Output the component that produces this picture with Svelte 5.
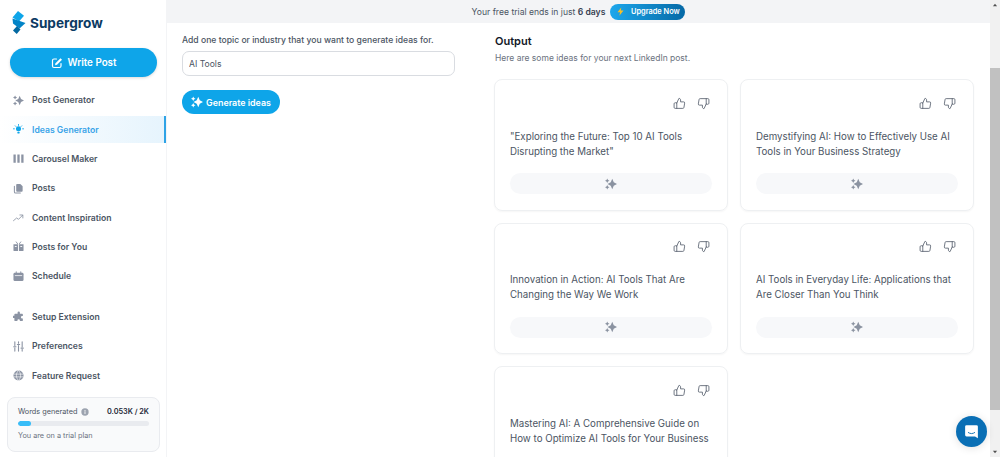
<script>
  const cards = [
    '"Exploring the Future: Top 10 AI Tools Disrupting the Market"',
    'Demystifying AI: How to Effectively Use AI Tools in Your Business Strategy',
    'Innovation in Action: AI Tools That Are Changing the Way We Work',
    'AI Tools in Everyday Life: Applications that Are Closer Than You Think',
    'Mastering AI: A Comprehensive Guide on How to Optimize AI Tools for Your Business'
  ];
  const spark = "M14.500 1.500l3 7 6.500 3.500-6.500 3.500-3 7-3-7L5 12l6.500-3.500zM4.500 1l1.500 2.800L9 5.500 6 7.200 4.500 10 3 7.200 0 5.500l3-1.700zM4.500 14l1.500 2.800 3 1.700-3 1.700L4.500 23 3 20.200 0 18.500l3-1.700z";
  const group1 = [
    { label: 'Post Generator', icon: 'spark' },
    { label: 'Ideas Generator', icon: 'bulb', active: true },
    { label: 'Carousel Maker', icon: 'bars' },
    { label: 'Posts', icon: 'docs' },
    { label: 'Content Inspiration', icon: 'trend' },
    { label: 'Posts for You', icon: 'gift' },
    { label: 'Schedule', icon: 'cal' }
  ];
  const group2 = [
    { label: 'Setup Extension', icon: 'puzzle' },
    { label: 'Preferences', icon: 'sliders' },
    { label: 'Feature Request', icon: 'globe' }
  ];
</script>

{#snippet navIcon(name)}
  <svg class="nav-icon" viewBox="0 0 24 24">
    {#if name === 'spark'}
      <path d={spark} fill="currentColor" />
    {:else if name === 'bulb'}
      <circle cx="12" cy="10.500" r="5.500" fill="currentColor" />
      <rect x="9.500" y="17" width="5" height="3.500" rx="1" fill="currentColor" />
      <path d="M12 1v2M3 10.500H1M23 10.500h-2M5 4l1.400 1.400M19 4l-1.400 1.400" stroke="currentColor" stroke-width="2" stroke-linecap="round" fill="none" />
    {:else if name === 'bars'}
      <path d="M1 3h5v18H1zM9.500 3h5v18h-5zM18 3h5v18h-5z" fill="currentColor" />
    {:else if name === 'docs'}
      <path d="M9 2h7l5 5v10a2 2 0 0 1-2 2H9a2 2 0 0 1-2-2V4a2 2 0 0 1 2-2z" fill="currentColor" />
      <path d="M3 7v12a3 3 0 0 0 3 3h10" stroke="currentColor" stroke-width="2.200" fill="none" stroke-linecap="round" />
    {:else if name === 'trend'}
      <path d="M1 19l7-6 4 3 9-9M15 6.500h6.500V13" stroke="currentColor" stroke-width="1.800" fill="none" stroke-linecap="round" stroke-linejoin="round" />
    {:else if name === 'gift'}
      <path d="M1 7h10v15H3a2 2 0 0 1-2-2zM13 7h10v13a2 2 0 0 1-2 2h-8z" fill="currentColor" />
      <path d="M7 2l3 4M17 2l-3 4" stroke="currentColor" stroke-width="2" stroke-linecap="round" />
      <path d="M4 12h4M16 12h4" stroke="#fff" stroke-width="2" />
    {:else if name === 'cal'}
      <rect x="1" y="4" width="22" height="18" rx="3" fill="currentColor" />
      <path d="M7 1.500v4M17 1.500v4" stroke="currentColor" stroke-width="2.200" stroke-linecap="round" />
      <path d="M4 10h16" stroke="#fff" stroke-width="1.600" />
    {:else if name === 'puzzle'}
      <path d="M10 3.500a2.500 2.500 0 0 1 5 0V6h5a1.500 1.500 0 0 1 1.500 1.500V11H20a2.700 2.700 0 0 0 0 5.400h1.500V20a2 2 0 0 1-2 2H15v-1.500a2.700 2.700 0 0 0-5.400 0V22H5a2 2 0 0 1-2-2v-4.500H1.500a2.700 2.700 0 0 1 0-5.400H3V7.500A1.500 1.500 0 0 1 4.500 6H10z" fill="currentColor" />
    {:else if name === 'sliders'}
      <path d="M4 2v8M4 15v7M12 2v3M12 10v12M20 2v11M20 18v4" stroke="currentColor" stroke-width="2.400" stroke-linecap="round" fill="none" />
      <path d="M1.500 12.500h5M9.500 7.500h5M17.500 15.500h5" stroke="currentColor" stroke-width="2.400" stroke-linecap="round" />
    {:else}
      <circle cx="12" cy="12" r="11" fill="currentColor" />
      <path d="M2 9h20M2 15h20M12 1c-6 6-6 16 0 22M12 1c6 6 6 16 0 22" stroke="#fff" stroke-width="1.400" fill="none" />
    {/if}
  </svg>
{/snippet}

{#snippet navItem(item)}
  <li class="nav-item" class:active={item.active}>
    {@render navIcon(item.icon)}
    <span>{item.label}</span>
  </li>
{/snippet}

<div class="page">
  <aside class="sidebar">
    <div class="brand">
      <svg class="logo" viewBox="0 0 14 23">
        <path d="M6 0L12 4.800 7 10.500 0.500 6.500z" fill="#0ea5e9" />
        <path d="M0.500 7.500L13.500 12 7.500 17.500 1 12.500z" fill="#0284c7" />
        <path d="M7 17l1.500 1.500-3.800 4.500L1 19.500 5 15z" fill="#0369a1" />
      </svg>
      <span>Supergrow</span>
    </div>
    <button class="write">
      <svg viewBox="0 0 24 24" class="write-icon">
        <path d="M11 4H6a3 3 0 0 0-3 3v11a3 3 0 0 0 3 3h11a3 3 0 0 0 3-3v-5" stroke="#fff" stroke-width="2.400" fill="none" stroke-linecap="round" />
        <path d="M19 2.500l3 3L12 15.500l-4 1 1-4z" fill="#fff" />
      </svg>
      Write Post
    </button>
    <ul class="nav first">
      {#each group1 as item}{@render navItem(item)}{/each}
    </ul>
    <ul class="nav second">
      {#each group2 as item}{@render navItem(item)}{/each}
    </ul>
    <div class="usage">
      <div class="usage-top">
        <span class="usage-label">Words generated
          <svg viewBox="0 0 24 24" class="info"><circle cx="12" cy="12" r="11" fill="#9ca3af" /><path d="M12 11v6M12 7v1" stroke="#fff" stroke-width="2.600" stroke-linecap="round" /></svg>
        </span>
        <b>0.053K / 2K</b>
      </div>
      <div class="track"><div class="fill"></div></div>
      <div class="plan">You are on a trial plan</div>
    </div>
  </aside>

  <div class="main">
    <div class="banner">
      <span>Your free trial ends in just <b>6 days</b></span>
      <button class="upgrade">
        <svg viewBox="0 0 24 24" class="bolt"><path d="M14 1L4 14h7l-2 9 11-14h-7z" fill="#fbbf24" /></svg>
        Upgrade Now
      </button>
    </div>
    <div class="columns">
      <section class="form">
        <label for="topic">Add one topic or industry that you want to generate ideas for.</label>
        <input id="topic" value="AI Tools" />
        <button class="generate">
          <svg viewBox="0 0 24 24" class="gen-icon"><path d={spark} fill="#fff" /></svg>
          Generate ideas
        </button>
      </section>
      <section class="output">
        <h2>Output</h2>
        <p class="sub">Here are some ideas for your next LinkedIn post.</p>
        <div class="grid">
          {#each cards as text}
            <article class="card">
              <div class="votes">
                <svg viewBox="0 0 24 24" class="thumb"><path d="M7 10.500v10.500M7 11l4-8.500c1.700 0 3 1.300 3 3V9h5.500a2 2 0 0 1 2 2.300l-1.300 7.900a2 2 0 0 1-2 1.800H4a2 2 0 0 1-2-2v-6.500a2 2 0 0 1 2-2z" /></svg>
                <svg viewBox="0 0 24 24" class="thumb"><path d="M17 13.500V3M17 13l-4 8.500c-1.700 0-3-1.300-3-3V15H4.500a2 2 0 0 1-2-2.300l1.300-7.900A2 2 0 0 1 5.800 3H20a2 2 0 0 1 2 2v6.500a2 2 0 0 1-2 2z" /></svg>
              </div>
              <p class="idea">{text}</p>
              <div class="expand">
                <svg viewBox="0 0 24 24" class="exp-icon"><path d={spark} fill="#8b93a1" /></svg>
              </div>
            </article>
          {/each}
        </div>
      </section>
    </div>
  </div>

  <div class="scrollbar">
    <svg viewBox="0 0 10 6" class="arrow"><path d="M5 1l3.500 4h-7z" fill="#505050" /></svg>
    <div class="thumbbar"></div>
    <svg viewBox="0 0 10 6" class="arrow"><path d="M5 5L1.500 1h7z" fill="#505050" /></svg>
  </div>

  <button class="chat" aria-label="Chat">
    <svg viewBox="0 0 24 24"><path d="M5 3h14a2 2 0 0 1 2 2v16.500l-4-2.500H5a2 2 0 0 1-2-2V5a2 2 0 0 1 2-2z" fill="#fff" /><path d="M7.500 13.500c2.800 2 6.200 2 9 0" stroke="#0a6fb5" stroke-width="1.300" fill="none" stroke-linecap="round" /></svg>
  </button>
</div>

<style>
  :global(body) {
    margin: 0;
    background: #fff;
  }
  .page {
    display: flex;
    position: relative;
    width: 1000px;
    height: 457px;
    overflow: hidden;
    font-family: Inter, "Liberation Sans", sans-serif;
    color: #374151;
  }
  button {
    font-family: inherit;
    border: none;
    cursor: pointer;
  }
  .sidebar {
    box-sizing: border-box;
    width: 167px;
    flex: none;
    display: flex;
    flex-direction: column;
    border-right: 1px solid #f3f4f6;
  }
  .brand {
    display: flex;
    align-items: center;
    gap: 4px;
    padding: 11px 0 0 12px;
    height: 23px;
    font-size: 13.600px;
    font-weight: 700;
    color: #0c3a63;
  }
  .logo {
    width: 14px;
    height: 23px;
  }
  .write {
    margin: 14px 0 0 10px;
    width: 147px;
    height: 29px;
    border-radius: 15px;
    background: #0ea5e9;
    color: #fff;
    font-size: 9.800px;
    font-weight: 600;
    display: flex;
    align-items: center;
    justify-content: center;
    gap: 5px;
    box-shadow: 0 1px 3px rgba(0, 0, 0, 0.15);
  }
  .write-icon {
    width: 12px;
    height: 12px;
  }
  .nav {
    list-style: none;
    margin: 0;
    padding: 0;
    display: flex;
    flex-direction: column;
    gap: 2.500px;
  }
  .first {
    margin-top: 10px;
  }
  .second {
    margin-top: 14px;
  }
  .nav-item {
    display: flex;
    align-items: center;
    gap: 8px;
    height: 26.800px;
    padding-left: 13px;
    font-size: 8.640px;
    font-weight: 600;
    color: #4b5563;
  }
  .nav-item.active {
    color: #38a3e8;
    background: linear-gradient(90deg, #fff, #e6f4fd);
    border-right: 2px solid #2ea3e6;
  }
  .nav-icon {
    width: 11px;
    height: 11px;
    color: #8b93a3;
    flex: none;
  }
  .active .nav-icon {
    color: #0ea5e9;
  }
  .usage {
    box-sizing: border-box;
    margin: 8.500px 0 0 7px;
    width: 153px;
    height: 55px;
    padding: 9px 10px;
    background: #f9fafb;
    border: 1px solid #e9ebef;
    border-radius: 8px;
    font-size: 7.300px;
    line-height: 10px;
  }
  .usage-top {
    display: flex;
    justify-content: space-between;
    align-items: center;
    color: #4b5563;
  }
  .usage-top b {
    font-weight: 600;
    color: #1f2937;
  }
  .usage-label {
    display: flex;
    align-items: center;
    gap: 4px;
  }
  .info {
    width: 8px;
    height: 8px;
  }
  .track {
    height: 5px;
    background: #e9ebef;
    border-radius: 3px;
    margin-top: 4px;
    overflow: hidden;
  }
  .fill {
    width: 13px;
    height: 100%;
    border-radius: 3px;
    background: #38bdf8;
  }
  .plan {
    margin-top: 5px;
    color: #6b7280;
  }
  .main {
    flex: 1;
    min-width: 0;
    display: flex;
    flex-direction: column;
  }
  .banner {
    flex: none;
    height: 23px;
    background: #f3f4f6;
    display: flex;
    align-items: center;
    justify-content: center;
    gap: 5px;
    font-size: 8.600px;
    color: #4b5563;
  }
  .banner b {
    font-weight: 600;
    color: #374151;
  }
  .upgrade {
    height: 16px;
    width: 75px;
    padding: 0;
    border-radius: 8px;
    background: linear-gradient(90deg, #1da7ec, #0569a6);
    color: #fff;
    font-size: 7.400px;
    font-weight: 600;
    display: flex;
    align-items: center;
    justify-content: center;
    gap: 6px;
  }
  .bolt {
    width: 9px;
    height: 9px;
  }
  .columns {
    display: flex;
    padding: 12px 0 0 15px;
  }
  .form {
    width: 273px;
    flex: none;
    display: flex;
    flex-direction: column;
    align-items: flex-start;
  }
  .form label {
    font-size: 8.600px;
    font-weight: 500;
    line-height: 11px;
    color: #4b5563;
  }
  input {
    box-sizing: border-box;
    width: 273px;
    height: 25px;
    margin-top: 5px;
    padding: 0 6px;
    border: 1px solid #d9dce1;
    border-radius: 7px;
    font-family: inherit;
    font-size: 8.600px;
    color: #4b5563;
    outline: none;
  }
  .generate {
    margin-top: 14px;
    width: 98px;
    height: 24px;
    padding: 0;
    border-radius: 12px;
    background: #0ea5e9;
    color: #fff;
    font-size: 8.900px;
    font-weight: 600;
    display: flex;
    align-items: center;
    justify-content: center;
    gap: 3px;
  }
  .gen-icon {
    width: 12px;
    height: 12px;
  }
  .output {
    margin-left: 40px;
    width: 480px;
    flex: none;
  }
  .output h2 {
    margin: 0;
    font-size: 11px;
    font-weight: 600;
    line-height: 13px;
    color: #111827;
  }
  .sub {
    margin: 5px 0 0;
    font-size: 8.500px;
    line-height: 11px;
    color: #6b7280;
  }
  .grid {
    display: grid;
    grid-template-columns: 234px 234px;
    gap: 12px 12px;
    margin: 15px 0 0 -1px;
  }
  .card {
    box-sizing: border-box;
    height: 131.500px;
    padding: 0 15px;
    border: 1px solid #eef0f2;
    border-radius: 8px;
    box-shadow: 0 1px 2px rgba(0, 0, 0, 0.04);
  }
  .votes {
    display: flex;
    justify-content: flex-end;
    gap: 11px;
    padding: 16.500px 2px 0 0;
    height: 14px;
  }
  .thumb {
    width: 13px;
    height: 13px;
    fill: none;
    stroke: #5b6472;
    stroke-width: 1.600;
    stroke-linejoin: round;
    stroke-linecap: round;
  }
  .idea {
    margin: 18px 0 0;
    height: 30px;
    font-size: 9.720px;
    line-height: 15px;
    color: #4b5563;
  }
  .expand {
    margin-top: 14.500px;
    height: 21px;
    border-radius: 11px;
    background: #f7f8fa;
    display: flex;
    align-items: center;
    justify-content: center;
  }
  .exp-icon {
    width: 12px;
    height: 12px;
  }
  .scrollbar {
    flex: none;
    width: 10px;
    background: #f1f1f1;
    display: flex;
    flex-direction: column;
    align-items: center;
  }
  .arrow {
    width: 6px;
    height: 4px;
    flex: none;
    margin: 3px 0;
  }
  .thumbbar {
    width: 100%;
    height: 342px;
    margin-top: 58px;
    margin-bottom: auto;
    background: #c1c1c1;
  }
  .chat {
    position: absolute;
    left: 956px;
    top: 416px;
    width: 31px;
    height: 31px;
    padding: 7px;
    border-radius: 50%;
    background: #0a6fb5;
    box-shadow: 0 1px 8px rgba(0, 0, 0, 0.12);
  }
  .chat svg {
    display: block;
    width: 17px;
    height: 17px;
  }
</style>
